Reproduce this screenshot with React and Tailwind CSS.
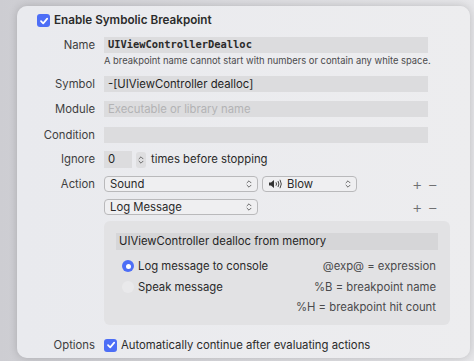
import React from "react";

const font = { fontFamily: "Inter, 'Liberation Sans', sans-serif" };

function Check({ className = "" }) {
  return (
    <div className={"flex items-center justify-center rounded-[3px] bg-[#4d6ef6] " + className}>
      <svg width="10" height="10" viewBox="0 0 10 10">
        <path d="M2 5.2 L4.2 7.4 L8.2 2.6" fill="none" stroke="white" strokeWidth="1.7" strokeLinecap="round" strokeLinejoin="round" />
      </svg>
    </div>
  );
}

function UpDown({ className = "" }) {
  return (
    <svg width="6" height="10" viewBox="0 0 6 10" className={className}>
      <path d="M1 3.8 L3 1.8 L5 3.8 M1 6.2 L3 8.2 L5 6.2" fill="none" stroke="#6b6b6b" strokeWidth="1" strokeLinecap="round" strokeLinejoin="round" />
    </svg>
  );
}

function Row({ label, children, className = "" }) {
  return (
    <div className={"flex items-center " + className}>
      <div className="w-[79px] pr-[1px] text-right text-[11.3px] text-[#3e3e40]">{label}</div>
      <div className="ml-[8px] flex flex-1 items-center">{children}</div>
    </div>
  );
}

function Field({ children, className = "" }) {
  return (
    <div className={"flex h-[16px] w-[324px] items-center bg-[#dcdcde] px-[4px] " + className}>{children}</div>
  );
}

function Popup({ children, className = "" }) {
  return (
    <div className={"flex h-[16px] items-center justify-between rounded-[4px] border border-[#b9b9bb] bg-[#efeff1] pl-[5px] pr-[5px] text-[11.3px] text-[#2a2a2a] " + className}>
      <div className="flex items-center">{children}</div>
      <UpDown />
    </div>
  );
}

function PlusMinus() {
  return (
    <div className="ml-auto mr-[32px] flex items-center gap-[5px] text-[16px] font-light leading-none text-[#707072]">
      <span>+</span>
      <span>−</span>
    </div>
  );
}

export default function App() {
  return (
    <div className="h-[361px] w-[474px] overflow-hidden bg-gradient-to-r from-[#cdcdd2] via-[#dcdce0] to-[#e6e6e9] pt-[6px] pl-[17px]" style={font}>
      <div className="flex h-[352px] w-[453px] flex-col rounded-[10px] bg-gradient-to-r from-[#e9eaee] to-[#ededef] shadow-[0_0_8px_rgba(0,0,0,0.18)]">
        <div className="mt-[8px] ml-[20px] flex h-[13px] items-center">
          <Check className="h-[13px] w-[13px]" />
          <span className="ml-[4px] text-[11.7px] font-semibold text-[#2b2b2b]">Enable Symbolic Breakpoint</span>
        </div>

        <Row label="Name" className="mt-[10px] h-[16px]">
          <Field>
            <span className="text-[10.4px] font-bold text-[#2a2a2a]" style={{ fontFamily: "'DejaVu Sans Mono', 'Liberation Mono', monospace" }}>
              UIViewControllerDealloc
            </span>
          </Field>
        </Row>
        <div className="mt-[2px] ml-[87px] h-[12px] text-[9.4px] leading-[12px] text-[#4a4a4c]">
          A breakpoint name cannot start with numbers or contain any white space.
        </div>

        <Row label="Symbol" className="mt-[9px] h-[16px]">
          <Field>
            <span className="text-[11.3px] text-[#1f1f1f]">-[UIViewController dealloc]</span>
          </Field>
        </Row>
        <Row label="Module" className="mt-[9px] h-[16px]">
          <Field>
            <span className="text-[11.3px] text-[#b3b3b5]">Executable or library name</span>
          </Field>
        </Row>
        <Row label="Condition" className="mt-[10px] h-[16px]">
          <Field />
        </Row>
        <Row label="Ignore" className="mt-[8px] h-[17px]">
          <div className="flex h-[17px] w-[28px] items-center bg-[#dcdcde] px-[4px] text-[11.3px] text-[#1f1f1f]">0</div>
          <div className="ml-[4px] flex h-[16px] w-[10px] items-center justify-center rounded-[3px] bg-[#dedee0]">
            <UpDown />
          </div>
          <span className="ml-[5px] text-[11.3px] text-[#2a2a2a]">times before stopping</span>
        </Row>
        <Row label="Action" className="mt-[8px] h-[16px]">
          <Popup className="w-[154px]">Sound</Popup>
          <Popup className="ml-[4px] w-[95px]">
            <svg width="15" height="10" viewBox="0 0 15 10" className="mr-[4px]">
              <path d="M1 3.5 H3 L6 1 V9 L3 6.5 H1 Z" fill="#333" />
              <path d="M8 3.3 Q9 5 8 6.7" fill="none" stroke="#333" strokeWidth="0.9" />
              <path d="M10 2 Q11.8 5 10 8" fill="none" stroke="#333" strokeWidth="0.9" />
              <path d="M12 0.8 Q14.6 5 12 9.2" fill="none" stroke="#333" strokeWidth="0.9" />
            </svg>
            Blow
          </Popup>
          <PlusMinus />
        </Row>
        <Row label="" className="mt-[7px] h-[16px]">
          <Popup className="w-[154px]">Log Message</Popup>
          <PlusMinus />
        </Row>

        <div className="mt-[6px] ml-[87px] flex h-[104px] w-[346px] flex-col rounded-[6px] bg-[#e2e2e4] px-[12px] pt-[12px]">
          <div className="flex h-[17px] items-center bg-[#d6d6d8] px-[3px] text-[11.3px] text-[#1f1f1f]">
            UIViewController dealloc from memory
          </div>
          <div className="mt-[8px] flex h-[16px] items-center text-[11.3px]">
            <div className="ml-[6px] flex h-[12px] w-[12px] items-center justify-center rounded-full bg-[#4d6ef6]">
              <div className="h-[5px] w-[5px] rounded-full bg-white" />
            </div>
            <span className="ml-[4px] text-[#2a2a2a]">Log message to console</span>
            <span className="ml-auto mr-[2px] text-[#4a4a4c]">@exp@ = expression</span>
          </div>
          <div className="mt-[5px] flex h-[16px] items-center text-[11.3px]">
            <div className="ml-[6px] h-[12px] w-[12px] rounded-full bg-[#e9e9eb]" />
            <span className="ml-[4px] text-[#2a2a2a]">Speak message</span>
            <span className="ml-auto mr-[2px] text-[#4a4a4c]">%B = breakpoint name</span>
          </div>
          <div className="mt-[4px] flex h-[16px] items-center justify-end text-[11.3px]">
            <span className="mr-[2px] text-[#4a4a4c]">%H = breakpoint hit count</span>
          </div>
        </div>

        <Row label="Options" className="mt-[13px] h-[14px]">
          <Check className="h-[13px] w-[13px]" />
          <span className="ml-[4px] text-[11.3px] text-[#2a2a2a]">Automatically continue after evaluating actions</span>
        </Row>
      </div>
    </div>
  );
}
